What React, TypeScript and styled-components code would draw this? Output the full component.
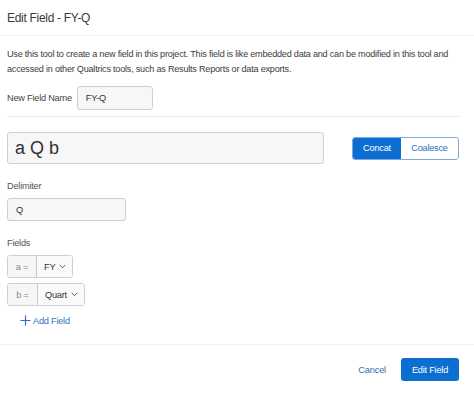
import React from "react";
import styled, { createGlobalStyle } from "styled-components";

const Global = createGlobalStyle`
  html, body { margin: 0; padding: 0; background: #fff; }
  body { font-family: "Liberation Sans", Arial, sans-serif; color: #333; }
  * { box-sizing: border-box; }
`;

const Dialog = styled.div`
  width: 474px;
  height: 395px;
  display: flex;
  flex-direction: column;
  background: #fff;
`;

const Header = styled.div`
  height: 36px;
  padding: 0 7px;
  display: flex;
  align-items: center;
  border-bottom: 1px solid #f0f0f0;
  font-size: 12px;
  letter-spacing: -0.3px;
  color: #3a3a3a;
`;

const Body = styled.div`
  flex: 1;
  padding: 11px 14px 0 7px;
  display: flex;
  flex-direction: column;
  letter-spacing: -0.22px;
`;

const Description = styled.p`
  margin: 0;
  font-size: 9.1px;
  line-height: 15px;
  color: #3c3c3c;
`;

const NameRow = styled.div`
  display: flex;
  align-items: center;
  gap: 5px;
  margin-top: 9px;
  font-size: 9.2px;
  color: #444;
  padding-bottom: 6px;
  border-bottom: 1px solid #ececec;
`;

const TextBox = styled.div<{ $w: number; $h: number; $size?: number }>`
  width: ${(p) => p.$w}px;
  height: ${(p) => p.$h}px;
  border: 1px solid #cfcfcf;
  border-radius: 3px;
  background: #f7f7f7;
  display: flex;
  align-items: center;
  padding: 0 ${(p) => (p.$size && p.$size > 14 ? 7 : 8)}px;
  font-size: ${(p) => p.$size ?? 9.2}px;
  letter-spacing: ${(p) => (p.$size && p.$size > 14 ? "0px" : "-0.22px")};
  color: #333;
`;

const FormulaRow = styled.div`
  display: flex;
  align-items: center;
  justify-content: space-between;
  margin-top: 15px;
`;

const Segmented = styled.div`
  display: flex;
  height: 23px;
  border: 1px solid #7da9dc;
  border-radius: 3px;
  overflow: hidden;
  margin-right: 1px;
`;

const SegButton = styled.div<{ $active?: boolean; $w: number }>`
  width: ${(p) => p.$w}px;
  display: flex;
  align-items: center;
  justify-content: center;
  font-size: 9.2px;
  background: ${(p) => (p.$active ? "#0b6ed0" : "#fff")};
  color: ${(p) => (p.$active ? "#fff" : "#2d6fc0")};
`;

const Label = styled.div<{ $top: number }>`
  margin-top: ${(p) => p.$top}px;
  margin-bottom: 5px;
  font-size: 9.2px;
  color: #555;
  line-height: 14px;
  padding-top: 3px;
`;

const FieldList = styled.div`
  display: flex;
  flex-direction: column;
  gap: 5px;
`;

const FieldRow = styled.div`
  display: flex;
  align-self: flex-start;
  height: 23px;
  border: 1px solid #cfcfcf;
  border-radius: 3px;
  overflow: hidden;
`;

const VarCell = styled.div<{ $w: number }>`
  width: ${(p) => p.$w}px;
  background: #f6f6f6;
  border-right: 1px solid #c8c8c8;
  display: flex;
  align-items: center;
  justify-content: center;
  font-size: 9.2px;
  color: #888;
`;

const SelectCell = styled.div`
  display: flex;
  align-items: center;
  gap: 4px;
  padding: 0 6px 0 7px;
  background: #fafafa;
  font-size: 9.2px;
  color: #333;
`;

const AddField = styled.div`
  display: flex;
  align-items: center;
  gap: 2px;
  margin: 9px 0 0 13px;
  font-size: 9.2px;
  color: #2e73c6;
`;

const Footer = styled.div`
  height: 50px;
  border-top: 1px solid #f0f0f0;
  display: flex;
  align-items: center;
  justify-content: flex-end;
  padding: 0 15px 0 0;
  gap: 15px;
  margin-bottom: 1px;
  letter-spacing: -0.22px;
`;

const LinkButton = styled.div`
  font-size: 9.4px;
  color: #3c6fb0;
`;

const PrimaryButton = styled.div`
  width: 58px;
  height: 23px;
  background: #0b6ed0;
  border-radius: 3px;
  color: #fff;
  font-size: 9.2px;
  display: flex;
  align-items: center;
  justify-content: center;
`;

const Chevron = () => (
  <svg width="7" height="5" viewBox="0 0 7 5" fill="none">
    <path d="M0.7 0.9 L3.5 3.7 L6.3 0.9" stroke="#555" strokeWidth="1" />
  </svg>
);

const Plus = () => (
  <svg width="11" height="11" viewBox="0 0 11 11">
    <path d="M5.5 0.5 V10.5 M0.5 5.5 H10.5" stroke="#2e73c6" strokeWidth="1.2" />
  </svg>
);

export default function App() {
  return (
    <>
      <Global />
      <Dialog>
        <Header>Edit Field - FY-Q</Header>
        <Body>
          <Description>
            Use this tool to create a new field in this project. This field is like embedded data and can be modified in this tool
            and accessed in other Qualtrics tools, such as Results Reports or data exports.
          </Description>
          <NameRow>
            <span>New Field Name</span>
            <TextBox $w={76} $h={24}>FY-Q</TextBox>
          </NameRow>
          <FormulaRow>
            <TextBox $w={317} $h={32} $size={18}>a Q b</TextBox>
            <Segmented>
              <SegButton $active $w={48}>Concat</SegButton>
              <SegButton $w={57}>Coalesce</SegButton>
            </Segmented>
          </FormulaRow>
          <Label $top={12}>Delimiter</Label>
          <TextBox $w={119} $h={23}>Q</TextBox>
          <Label $top={12}>Fields</Label>
          <FieldList>
            <FieldRow>
              <VarCell $w={29}>a =</VarCell>
              <SelectCell>FY <Chevron /></SelectCell>
            </FieldRow>
            <FieldRow>
              <VarCell $w={30}>b =</VarCell>
              <SelectCell>Quart <Chevron /></SelectCell>
            </FieldRow>
          </FieldList>
          <AddField><Plus />Add Field</AddField>
        </Body>
        <Footer>
          <LinkButton>Cancel</LinkButton>
          <PrimaryButton>Edit Field</PrimaryButton>
        </Footer>
      </Dialog>
    </>
  );
}
